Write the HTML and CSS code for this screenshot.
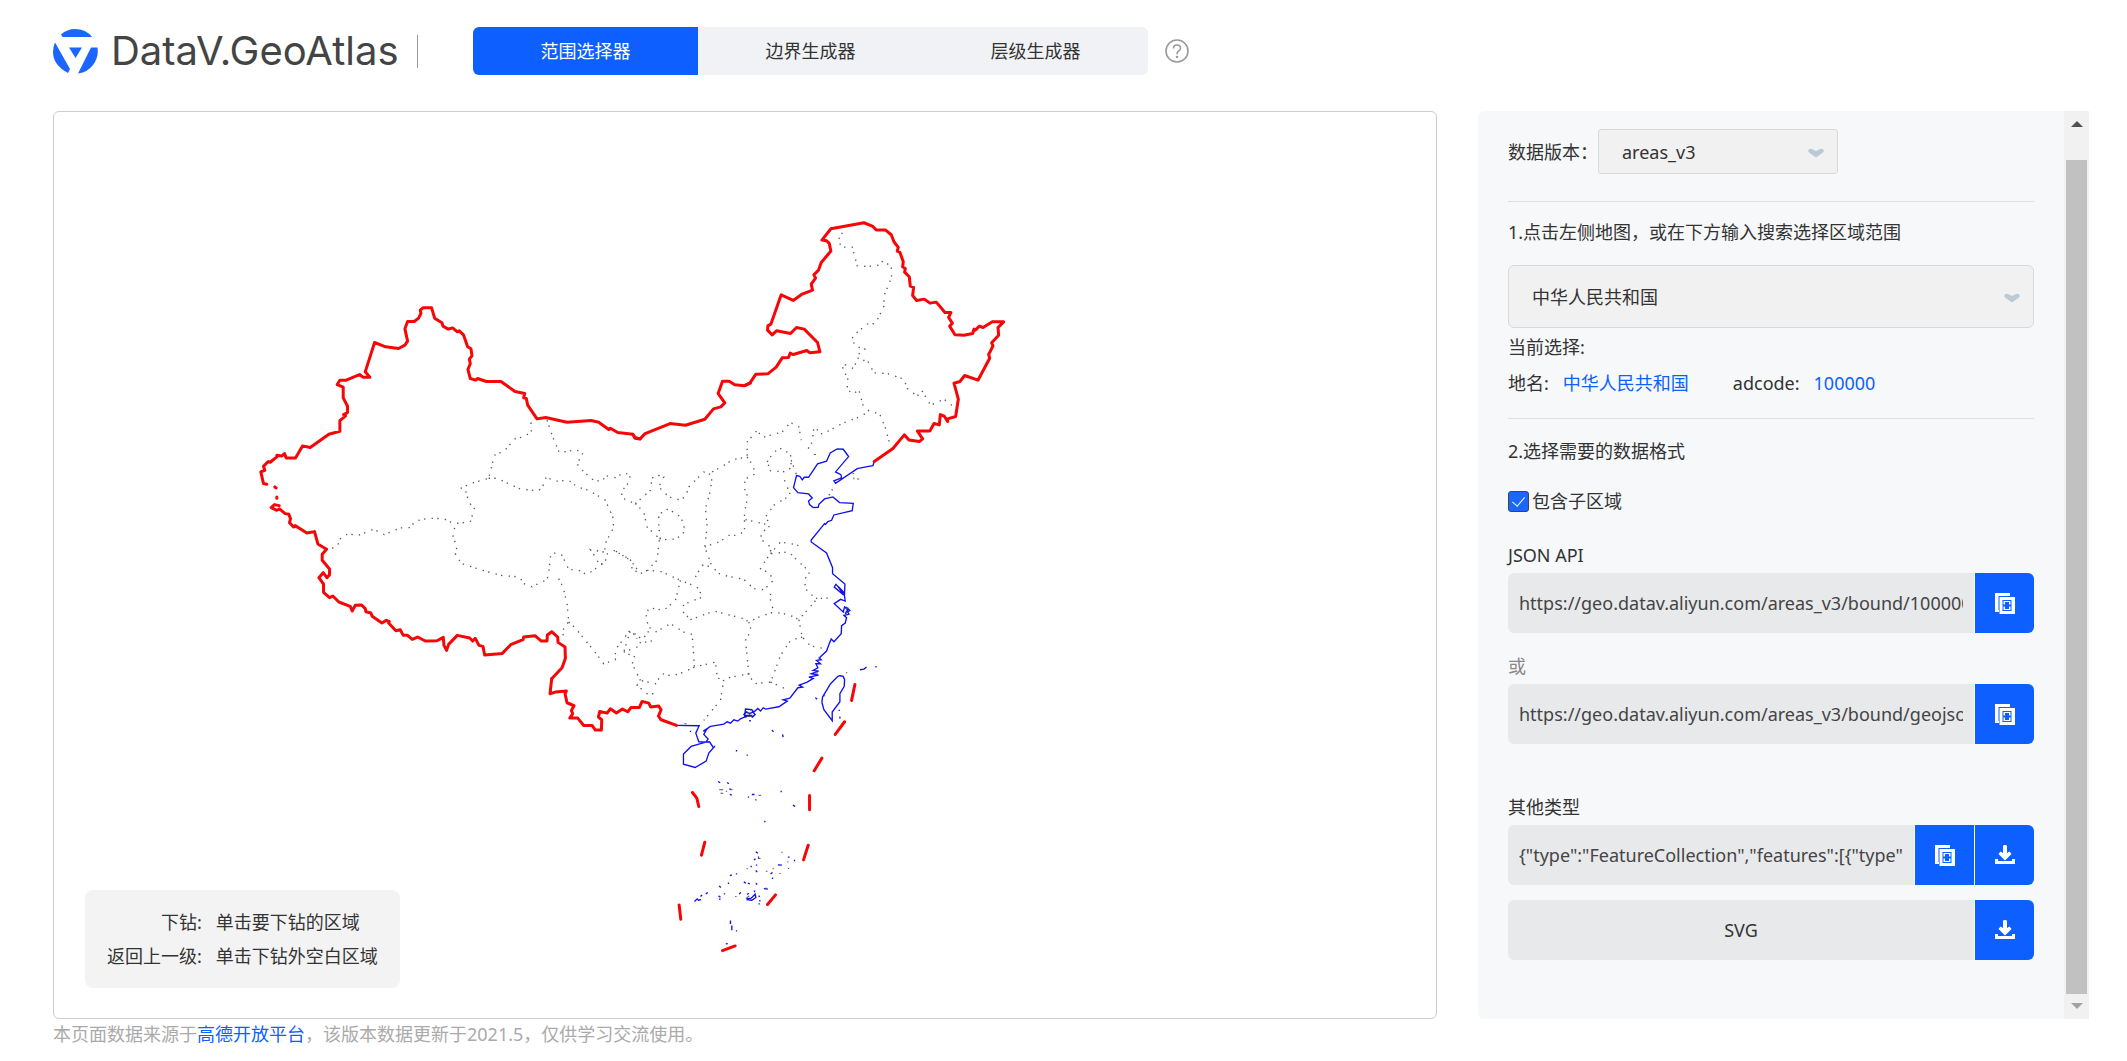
FILE: index.html
```html
<!DOCTYPE html>
<html lang="zh-CN">
<head>
  <meta charset="UTF-8" />
  <meta name="viewport" content="width=device-width, initial-scale=1.0"/>
  <title>DataV.GeoAtlas</title>
  <link rel="stylesheet" href="styles.css">
</head>
<body>

<!-- iconos compartidos -->
<svg class="sprite" aria-hidden="true">
  <symbol id="icon-copy" viewBox="0 0 20 21">
    <path fill="#fff" fill-rule="evenodd" d="M0 0h15v3H3.500v14H4v2H0zM4.500 4H20v17H4.500zM7.500 7v11h9V7zM8.500 8h7v9h-7zM10 9v2.500H8.500v2H10V16h4v-2.500h1.500v-2H14V9z"/>
  </symbol>
  <symbol id="icon-download" viewBox="0 0 20 20">
    <path fill="#fff" d="M8 1q0-1 2-1t2 1v7l2.500-1.500L16.500 9 10 15.500 3.500 9l2-2.500L8 8zM0 14h3v2h14v-2h3v5H0z"/>
  </symbol>
  <symbol id="icon-arrow" viewBox="0 0 18 10">
    <path fill="#bccad6" d="M1 3q1-3 4-2l4 2 4-2q3-1 4 2-1 2-3 3L9 9.500 4 6Q2 5 1 3z"/>
  </symbol>
</svg>

<header class="header">
  <div class="logo">
    <svg class="logo-mark" viewBox="0 0 45 45" aria-hidden="true">
      <g fill="#1b66ff">
        <path d="M8 5.500Q14 0 22 0q11 0 17 8H9.500z"/>
        <path d="M2 13.500 17 40l-2 4Q0 36 0 23q0-5 2-9.500z"/>
        <path d="M38 18.500h6.500Q46 28 40 36q-5 7-15 8.500z"/>
        <path d="M16 18.500h13L22.500 29z"/>
      </g>
    </svg>
    <span class="logo-text">DataV.GeoAtlas</span>
  </div>
  <nav class="tabs">
    <button class="tab active">范围选择器</button>
    <button class="tab">边界生成器</button>
    <button class="tab">层级生成器</button>
  </nav>
  <button class="help" aria-label="帮助">
    <svg viewBox="0 0 24 24" fill="none" stroke="#999" stroke-width="1.600">
      <circle cx="12" cy="12" r="11"/>
      <path d="M8.500 9.500Q8.500 6 12 6t3.500 3.200Q15.500 11 13.500 12.200 12 13.200 12 15.200"/>
      <circle cx="12" cy="18" r=".5"/>
    </svg>
  </button>
</header>

<main class="main">
  <section class="map">
    <svg class="china" viewBox="0 0 4143 2715" fill="none">
      <!-- limites provinciales -->
      <g class="province">
        <g transform="translate(558 534)">
          <path d="M259 777L290 770 302 742 325 730 352 736 400 717 432 733 480 713 510 712 525 692 565 684 610 685 640 700 690 695 702 655 685 635 678 606 660 595 690 580 745 564 760 505 765 492 790 484 825 445 850 440 873 425 872 395"/>
          <path d="M745 564L770 564 815 585 840 596 895 602 912 580 917 560 945 573 985 570 1010 590 1045 600 1095 630 1120 687 1118 715 1090 768 1105 800 1080 825 1040 853 1015 840 985 837 965 795 945 787 930 800 925 850 920 868 875 889 850 880 838 860 780 855 720 838 665 820 645 795 650 768 638 740 645 700"/>
          <path d="M920 390L937 440 957 488 1008 478 1028 492 1010 518 1015 530 1055 567 1085 575 1095 556 1125 562 1150 547 1170 555 1160 585 1140 605 1155 630 1187 640"/>
          <path d="M955 865L968 890 980 940 985 995 970 1010 968 1035M985 995L1005 1013 1035 1050 1060 1080 1090 1120 1125 1108 1125 1078 1170 1018 1190 1045"/>
          <path d="M1120 780L1170 808 1175 835 1200 851M1090 785L1050 778 1065 800 1075 820 1105 822"/>
        </g>
        <g transform="translate(2058 264)">
          <path d="M305 98L290 125 310 141 335 141 350 197 380 199 410 197 430 180 452 203 453 232 430 287 430 318 405 370 380 372 335 408 342 437 373 447 350 465 355 482 380 480 400 518 440 520 490 537 500 565 530 588 543 570 570 615 610 597 640 620"/>
          <path d="M345 490L338 505 310 492 305 510 322 530 320 565 335 582 355 570 370 625"/>
        </g>
        <g transform="translate(1458 804)">
          <path d="M285 370L310 395 320 440 357 475 350 540 320 570 300 580 270 540 222 510"/>
          <path d="M285 370L330 330 335 295 345 283 370 290 355 320 385 350 415 358 435 350 445 320 490 275 515 285 510 330 495 385 500 440 493 500 515 560 540 583 610 597 640 625 670 628 695 605 690 580 660 565 675 540 690 520 690 500 665 480 660 460 690 435 675 410 700 375 750 345 740 320 728 290"/>
          <path d="M515 275L560 250 575 238 620 230 620 185 650 150 665 172 725 155 750 127 775 140 782 180M620 230L640 260 640 285 615 295 610 320 622 350 612 395 612 450 595 465 565 465 540 483 493 500M615 418L690 435"/>
          <path d="M680 245L700 215 725 203 750 225 752 260 740 275 690 272 680 245M752 240L770 290M803 205L815 185 820 140 845 162 905 130 965 107 985 90 1018 103 1035 145 1050 200"/>
          <path d="M357 475L390 480 428 465 432 430 410 400 375 385 355 405 355 440 360 475M320 570L360 573 420 600 470 620 487 650 430 672 425 692 450 718M465 590L485 555 515 560"/>
          <path d="M420 600L405 660 370 690 325 682 315 715 330 745 345 755 390 730 430 755 455 762 462 860 525 845 530 890 550 905"/>
          <path d="M450 718L520 692 610 715 625 725 660 708 700 695 745 703 775 718 830 655 875 652M830 655L800 635 790 600 808 575 770 540 745 515 690 520M690 520L720 485 760 492 790 500M690 640L690 660 700 695"/>
          <path d="M775 718L785 770 810 797 855 805M785 770L750 780 720 825 700 880 690 905 640 910 625 880 620 830 615 780 632 750 625 725M690 905L735 925M625 880L550 895 540 960 510 995 490 1020"/>
          <path d="M462 860L430 875 395 887 365 880 345 910 300 900 290 915 320 940 345 940M300 900L275 850 285 830 250 815 270 750 315 785 345 780M250 815L290 800 330 745M865 345L880 320"/>
        </g>
      </g>

      <!-- costa e islas -->
      <g class="coast">
        <path transform="translate(1458 804)" d="M1001 244L997 256 980 259 950 265 885 309 880 302 903 293 901 283 885 275 924 229 908 207 890 206 869 218 858 243 831 251 804 291 791 291 785 299 778 288 768 286 759 322 772 337 804 341 815 353 804 362 807 373 818 382 833 381 835 372 852 356 877 350 897 367 938 369 935 391 880 404 873 420 862 424 855 432 852 430 812 479 812 485 858 518 876 562 876 580 913 611 912 640 886 612 881 620 909 644 892 618 910 636 914 662 900 657 881 670 908 695 912 680 922 688 914 700 928 690 916 680 925 702 910 705 918 712 914 728 903 736 902 760 880 784 872 776 866 790 858 812 836 833 842 838 828 840 840 850 826 850 832 862 818 870 834 872 812 880 834 884 805 890 818 894 800 905 776 914 786 920 772 922 748 953 728 958 740 962 715 979 675 986 668 982 660 992 652 984 640 995 634 988 615 986 612 1010 600 1015 592 1022 580 1018 570 1028 560 1024 550 1031 510 1038 489 1052"/>
        <g transform="translate(1758 1644)">
          <path d="M189 212L198 208 190 222 203 236 196 245 207 244 219 262 205 278 197 302 164 321 129 311 129 281 152 258 196 245 175 244 166 218 176 196 108 195"/>
          <path d="M598 46L608 48 612 58 611 78 598 100 598 124 575 155 575 181 550 148 544 125 546 110 570 70 592 48Z"/>
          <path d="M310 162l8-8 10 6 8-6 8 8-8 8-10-6-10 6zM314 165h22M318 715l14-2 12-12 2 10-12 8-16-2M162 723l8-8 4 4 8-2M658 28l12-2 8-6M704 19h4M524 112l6 4M394 209l5 5M426 222l2 8M222 256v5M148 213h4M286 271h4M318 284h4M233 363l6 4M260 366l5 4M266 386h6M268 402l6 2M322 410h4M334 402h8M344 418h4M420 393h4M457 434l7 4M371 483h4M346 574l6 4M340 598l5-3M352 590h4M330 618h4M348 612v4M346 630l4 5M390 640l6-4M412 613l12 1M442 590h5M460 600h4M394 653h4M268 645l6-2M286 640h4M310 664l6 4M322 668l6 2M346 668l4 4M370 684l12 2M262 668h4M236 676l5 5M296 700l5-4M320 702l5-4M342 690v5M234 706l6 4M236 716h4M250 700h4M180 708l5-5M196 700l6-4M354 706l4 2M358 718v5M354 730h4M270 780v10M274 795v14M286 811h4M256 850l6-1M594 150h4M596 172h4M326 181h5"/>
        </g>
      </g>
      <g class="islet">
        <path transform="translate(1758 1644)" d="M236 388h12M240 398h8M256 392h4M270 388h6M354 404h8M422 575h4M442 602v4M442 624h4M396 625h4M376 632h5M416 639h4M318 625h4M284 708h4M132 190h6M616 37h4M550 106h4M596 170h4M318 158h16M320 168h14M374 683h6M352 594h8M316 714l10-8"/>
        <path transform="translate(1458 804)" d="M936 280h4M940 292v5M950 296h6M820 223h6M916 684h10M912 696h12M822 878h10M834 832h6"/>
      </g>

      <!-- fronteras -->
      <g class="border">
        <path transform="translate(558 534)" d="M80 582L70 580 62 545 74 540 70 528 84 514 90 516 110 500 110 495 125 497 133 490 138 503 166 503 187 467 210 472 266 432 299 423 299 391 316 377 310 373 322 367 322 348 309 323 309 291 291 283 299 270 318 270 358 253 368 261 389 261 375 245 403 157 436 170 475 175 494 165 502 153 494 116 502 94 522 94 535 84 542 70 540 60 548 53 574 53 583 84 605 98 608 108 624 117 637 113 651 125 657 122 670 135 682 170 692 176 695 197 687 207 690 220 683 238 690 265 706 270 712 265 738 274 782 274 824 304 853 310 850 323 858 325 862 345 890 386 916 382 980 396 1052 391 1075 396 1105 418 1110 414 1132 427 1177 432 1184 444 1199 446"/>
        <path transform="translate(558 534)" d="M104 590l4 3M110 620v4M117 646L103 643 93 652 110 660 118 656 135 670 146 672 151 685 148 697 160 710 165 706 200 728 223 724 233 761 259 777 246 792 246 810 268 836 268 853 260 862 249 847 236 862 250 881 250 906 268 922 278 917 296 935 330 948 336 962 345 945 364 944 375 955 377 964 392 968 396 978 425 998 438 990 447 993 445 998 467 1021 480 1018 489 1035 502 1035 516 1047 532 1040 555 1052 590 1051 609 1041 611 1065 619 1080 625 1062 651 1035 688 1043 697 1052 705 1044 716 1065 728 1068 733 1094 786 1089 811 1063 848 1048 850 1040 884 1036 903 1052 920 1052 921 1034 934 1024 952 1040 953 1056 974 1070 975 1104 965 1132 934 1165"/>
        <path transform="translate(1458 804)" d="M34 895L29 940 45 935 78 932 74 940 80 967 101 976 93 990 97 1000 88 1013 112 1013 130 1035 155 1035 165 1049 183 1049 184 1018 174 1010 178 993 200 998 210 985 228 998 246 986 262 994 272 981 297 981 305 963 325 968 331 980 355 977 362 988 354 1007 362 1018 408 1035"/>
        <path transform="translate(1458 804)" d="M277 162L284 172 299 176 314 160 389 130 435 135 493 117 519 86 541 80 553 68 533 40 546 3 566 3 583 14 611 17 630 8"/>
        <path transform="translate(2058 264)" d="M12 556L28 549 46 522 82 521 107 501 125 473 144 472 149 459 158 463 199 451 208 458 238 455 231 427 191 387 168 382 150 400 108 392 95 404 81 390 82 377 91 372 122 284 158 301 183 283 216 270 212 252 225 234 220 224 234 210 242 187 271 153 266 130 258 122 244 120 271 86 370 68 397 79 407 90 435 90 452 104 460 125 473 142 470 153 478 157 488 185 486 200 494 205 492 216 506 230 509 258 519 262 516 286 528 301 551 297 568 309 587 306 613 337 631 337 624 352 635 369 627 378 643 404 670 405 696 400 700 387 704 390 716 378 727 382 755 365 789 365 772 382 774 405 753 428 757 437 744 463 747 474 712 540 672 526 658 544 640 549 653 597 645 649 621 656 621 664 611 648 599 643 596 674 580 670 568 692 530 692 546 716 536 724 505 719 491 704 457 745 401 784"/>
        <path transform="translate(1758 1644)" d="M643 72L633 120M612 184L584 222M544 293L521 331M507 405V448M503 554L489 598M405 703L381 732M284 856L246 870M116 733L121 776M193 545L183 584M156 396L169 413 175 438"/>
      </g>
    </svg>
    <dl class="tips">
      <dt>下钻:</dt><dd>单击要下钻的区域</dd>
      <dt>返回上一级:</dt><dd>单击下钻外空白区域</dd>
    </dl>
  </section>

  <aside class="sidebar">
    <form class="panel">
      <div class="version">
        <label for="version">数据版本：</label>
        <div class="select small">
          <select id="version"><option>areas_v3</option></select>
          <svg><use href="#icon-arrow"/></svg>
        </div>
      </div>

      <div class="block">
        <label class="title" for="area">1.点击左侧地图，或在下方输入搜索选择区域范围</label>
        <div class="select">
          <select id="area"><option>中华人民共和国</option></select>
          <svg><use href="#icon-arrow"/></svg>
        </div>
        <p class="current">当前选择:</p>
        <p class="info">
          <span>地名:</span><b>中华人民共和国</b>
          <span>adcode:</span><b>100000</b>
        </p>
      </div>

      <div class="block">
        <p class="title">2.选择需要的数据格式</p>
        <label class="check"><input type="checkbox" checked>包含子区域</label>

        <label class="name" for="api">JSON API</label>
        <div class="row">
          <input type="text" id="api" readonly value="https://geo.datav.aliyun.com/areas_v3/bound/100000_full.json">
          <button type="button" aria-label="复制"><svg class="copy"><use href="#icon-copy"/></svg></button>
        </div>

        <label class="name or" for="api2">或</label>
        <div class="row">
          <input type="text" id="api2" readonly value="https://geo.datav.aliyun.com/areas_v3/bound/geojson?code=100000_full">
          <button type="button" aria-label="复制"><svg class="copy"><use href="#icon-copy"/></svg></button>
        </div>

        <label class="name other" for="json">其他类型</label>
        <div class="row">
          <input type="text" id="json" readonly value='{"type":"FeatureCollection","features":[{"type":"Feature"}]}'>
          <button type="button" aria-label="复制"><svg class="copy"><use href="#icon-copy"/></svg></button>
          <button type="button" aria-label="下载"><svg class="download"><use href="#icon-download"/></svg></button>
        </div>
        <div class="row svg-row">
          <div class="cell">SVG</div>
          <button type="button" aria-label="下载 SVG"><svg class="download"><use href="#icon-download"/></svg></button>
        </div>
      </div>
    </form>
    <div class="scrollbar" aria-hidden="true">
      <i class="up"></i>
      <div class="thumb"></div>
      <i class="down"></i>
    </div>
  </aside>
</main>

<footer class="footer">本页面数据来源于<a href="#">高德开放平台</a>，该版本数据更新于2021.5，仅供学习交流使用。</footer>

</body>
</html>
```
FILE: styles.css
```css
* { box-sizing: border-box; }
body {
  margin: 0;
  padding: 27px 38px 0 53px;
  font-family: "Noto Sans", "Noto Sans CJK SC", sans-serif;
  font-size: 18px;
  line-height: 28px;
  color: #333;
  background: #fff;
}
p, dl, dd { margin: 0; }
button, input, select {
  font: inherit;
  color: inherit;
  border: none;
  border-radius: 0;
}
button { cursor: pointer; padding: 0; }
a { color: #0d5fff; text-decoration: none; }
.sprite { display: none; }

.header {
  display: flex;
  align-items: flex-start;
  height: 84px;
}
.logo {
  display: flex;
  align-items: center;
  width: 420px;
}
.logo-mark { width: 45px; height: 45px; }
.logo-text {
  flex: 1;
  display: flex;
  align-items: center;
  margin-left: 13px;
  font-family: Inter, sans-serif;
  font-size: 40px;
  line-height: 48px;
  color: #444;
}
.logo-text::after {
  content: "";
  width: 1px;
  height: 33px;
  margin-left: 18px;
  background: #999;
}
.tabs {
  display: flex;
  width: 675px;
  border-radius: 6px;
  overflow: hidden;
}
.tab {
  flex: 1;
  height: 48px;
  background: #f1f2f5;
}
.tab.active { background: #0d5fff; color: #fff; }
.help {
  width: 24px;
  height: 24px;
  margin: 12px 0 0 17px;
  background: none;
}
.help svg { display: block; width: 24px; height: 24px; }

.main {
  display: grid;
  grid-template-columns: minmax(0, 1fr) 611px;
  gap: 41px;
}
.map {
  position: relative;
  border: 1px solid #ccc;
  border-radius: 6px;
}
.china { display: block; width: 100%; height: 100%; }
.border { stroke: #f60606; stroke-width: 9; stroke-linejoin: round; stroke-linecap: round; }
.coast { stroke: #1010f0; stroke-width: 4; }
.islet { stroke: #555; stroke-width: 3; }
.province { stroke: #555; stroke-width: 4; stroke-dasharray: 4 13 4 19; }
.tips {
  position: absolute;
  left: 31px;
  bottom: 30px;
  display: grid;
  grid-template-columns: auto auto;
  gap: 6px 14px;
  padding: 18px 22px;
  background: #f3f3f3;
  border-radius: 8px;
}
.tips dt { text-align: right; }

.sidebar {
  display: flex;
  background: #f7f8fa;
  border-radius: 6px 0 0 6px;
}
.panel {
  flex: 1;
  min-width: 0;
  padding: 18px 30px 58px;
}
.version { display: flex; align-items: center; }
.version label { width: 90px; white-space: nowrap; }
.select { position: relative; }
.select select {
  display: block;
  width: 100%;
  height: 63px;
  padding: 0 23px;
  background: #f1f1f1;
  border: 1px solid #d9d9d9;
  border-radius: 6px;
  appearance: none;
}
.select svg {
  position: absolute;
  right: 13px;
  top: 50%;
  width: 18px;
  height: 10px;
  margin-top: -4px;
}
.select.small { width: 240px; }
.select.small select { height: 45px; border-radius: 3px; }
.block {
  margin-top: 27px;
  padding-top: 16px;
  border-top: 1px solid #dfe0e2;
}
.block + .block { margin-top: 21px; padding-top: 18px; }
.title { display: block; margin-bottom: 19px; }
.current { margin: 5px 0 8px; }
.info { display: flex; }
.info b {
  margin: 0 44px 0 14px;
  color: #0d5fff;
  font-weight: normal;
}
.check {
  display: flex;
  align-items: center;
  gap: 3px;
  margin-top: 22px;
}
.check input {
  appearance: none;
  width: 21px;
  height: 21px;
  margin: 0;
  background: #1b66ff;
  border: 1px solid #444;
  border-radius: 3px;
}
.check input:checked::before {
  content: "";
  display: block;
  width: 6px;
  height: 11px;
  margin: 2px 0 0 6px;
  border: solid #fff;
  border-width: 0 1px 1px 0;
  transform: rotate(40deg);
}
.name { display: block; margin: 26px 0 4px; }
.or { margin-top: 19px; color: #888; }
.other { margin-top: 49px; }
.row {
  display: flex;
  gap: 1px;
  height: 60px;
  border-radius: 6px;
  overflow: hidden;
}
.row input, .cell {
  flex: 1;
  min-width: 0;
  padding: 0 11px;
  background: #e8e9eb;
}
.row input { color: #444; outline: none; }
.cell { line-height: 60px; text-align: center; }
.row button {
  display: flex;
  align-items: center;
  justify-content: center;
  width: 59px;
  background: #0d5fff;
}
.copy { width: 20px; height: 21px; }
.download { width: 20px; height: 20px; }
.svg-row { margin-top: 15px; }

.scrollbar {
  display: flex;
  flex-direction: column;
  align-items: center;
  width: 25px;
  padding: 10px 0;
  background: #f1f1f1;
}
.up, .down { border: 6px solid transparent; border-top-width: 0; border-bottom: 6px solid #505050; }
.down { border-bottom: 0; border-top: 6px solid #a3a3a3; }
.thumb {
  flex: 1;
  width: 21px;
  margin: 33px 0 9px;
  background: #c1c1c1;
}

.footer { margin-top: 1px; color: #aaa; }
```
